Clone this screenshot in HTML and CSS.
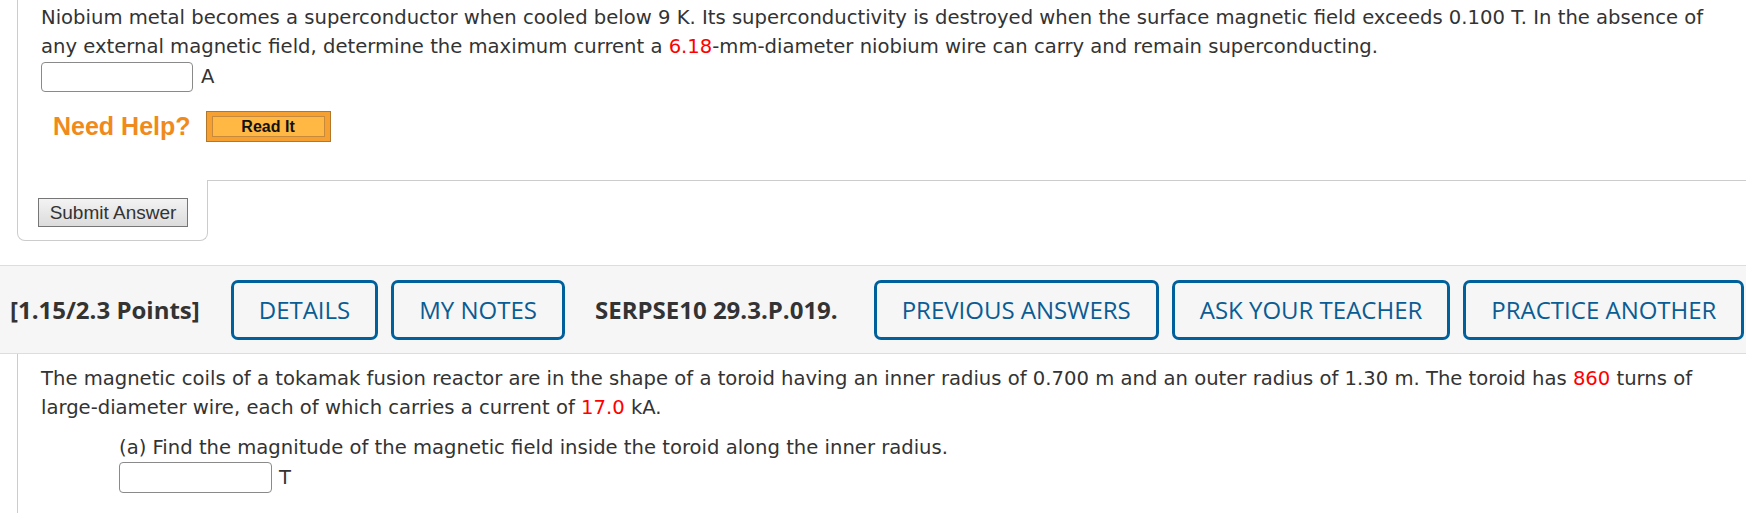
FILE: index.html
```html
<!DOCTYPE html>
<html lang="en">
<head>
<meta charset="utf-8">
<title>Question</title>
<link rel="stylesheet" href="styles.css">
</head>
<body>
<div class="page">
  <section class="q q1">
    <p class="qtext">Niobium metal becomes a superconductor when cooled below 9 K. Its superconductivity is destroyed when the surface magnetic field exceeds 0.100 T. In the absence of any external magnetic field, determine the maximum current a <span class="red">6.18</span>-mm-diameter niobium wire can carry and remain superconducting.</p>
    <div class="answer"><input class="ans" type="text"><span class="unit">A</span></div>
    <div class="help"><span class="need">Need Help?</span><button class="readit" type="button"><span class="readit-in">Read It</span></button></div>
  </section>
  <div class="qfoot">
    <div class="tab"><button class="submit" type="button">Submit Answer</button></div>
    <div class="fill"></div>
  </div>
  <div class="bar">
    <span class="pts">[1.15/2.3 Points]</span>
    <button class="btn" type="button">DETAILS</button>
    <button class="btn" type="button">MY NOTES</button>
    <span class="code">SERPSE10 29.3.P.019.</span>
    <button class="btn" type="button">PREVIOUS ANSWERS</button>
    <button class="btn" type="button">ASK YOUR TEACHER</button>
    <button class="btn" type="button">PRACTICE ANOTHER</button>
  </div>
  <section class="q q2">
    <p class="qtext">The magnetic coils of a tokamak fusion reactor are in the shape of a toroid having an inner radius of 0.700 m and an outer radius of 1.30 m. The toroid has <span class="red">860</span> turns of large-diameter wire, each of which carries a current of <span class="red">17.0</span> kA.</p>
    <div class="sub">
      <p class="qtext">(a) Find the magnitude of the magnetic field inside the toroid along the inner radius.</p>
      <div class="answer"><input class="ans ans2" type="text"><span class="unit">T</span></div>
    </div>
  </section>
</div>
</body>
</html>
```

FILE: styles.css
```css
html, body {
  margin: 0;
  padding: 0;
  background: #ffffff;
  overflow: hidden;
}
body {
  font-family: "DejaVu Sans", Verdana, sans-serif;
  font-size: 19.6px;
  color: #333333;
}
.page {
  width: 1746px;
}
.q {
  margin-left: 17px;
  border-left: 1px solid #cccccc;
  padding-left: 23px;
  padding-right: 28px;
}
.q1 {
  padding-top: 3px;
  padding-bottom: 38px;
}
.qtext {
  margin: 0;
  line-height: 29px;
}
.red {
  color: #ff0000;
}
.answer {
  display: flex;
  align-items: center;
  gap: 8px;
  margin-top: 1px;
}
.ans {
  width: 152px;
  height: 30px;
  box-sizing: border-box;
  border: 1px solid #8a8a8a;
  border-radius: 4px;
  padding: 0;
  margin: 0;
  background: #ffffff;
}
.unit {
  line-height: 30px;
}
.help {
  display: flex;
  align-items: center;
  gap: 15px;
  margin-top: 19px;
  padding-left: 12px;
}
.need {
  font-family: "Liberation Sans", Arial, sans-serif;
  font-weight: bold;
  font-size: 25px;
  color: #f08a1d;
}
.readit {
  box-sizing: border-box;
  width: 125px;
  height: 31px;
  margin: 0;
  padding: 4px 5px;
  border: 1px solid #b3772c;
  background: #f6a031;
  display: flex;
  cursor: pointer;
}
.readit-in {
  flex: 1;
  display: flex;
  align-items: center;
  justify-content: center;
  border: 1px solid #c7893a;
  background: #ffb843;
  font-family: "Liberation Sans", Arial, sans-serif;
  font-weight: bold;
  font-size: 16px;
  color: #111111;
}
.qfoot {
  display: flex;
  margin-left: 17px;
}
.tab {
  width: 191px;
  height: 61px;
  box-sizing: border-box;
  border: 1px solid #cccccc;
  border-top: none;
  border-radius: 0 0 8px 8px;
  padding: 18px 0 0 20px;
}
.fill {
  flex: 1;
  border-top: 1px solid #cccccc;
}
.submit {
  box-sizing: border-box;
  width: 150px;
  height: 29px;
  margin: 0;
  padding: 0;
  border: 1px solid #767676;
  background: linear-gradient(#f3f3f3, #dcdcdc);
  font-family: "Liberation Sans", Arial, sans-serif;
  font-size: 19px;
  color: #333333;
}
.bar {
  margin-top: 24px;
  height: 87px;
  border-top: 1px solid #dddddd;
  border-bottom: 1px solid #dddddd;
  background: #f6f6f6;
  display: flex;
  align-items: center;
  gap: 13px;
  white-space: nowrap;
  font-family: "Open Sans", sans-serif;
  font-size: 24px;
}
.pts, .code {
  font-weight: 700;
  color: #333333;
  flex: none;
}
.pts {
  margin-left: 10px;
  margin-right: 18px;
}
.code {
  margin-left: 17px;
  margin-right: 23px;
}
.btn {
  flex: none;
  height: 60px;
  box-sizing: border-box;
  margin: 0;
  padding: 0 25px;
  border: 3px solid #00609c;
  border-radius: 7px;
  background: transparent;
  color: #0a5c93;
  font-family: "Open Sans", sans-serif;
  font-size: 24px;
  display: flex;
  align-items: center;
}
.q2 {
  padding-top: 10px;
  padding-bottom: 40px;
}
.sub {
  margin-top: 11px;
  margin-left: 78px;
}
.answer .ans2 {
  width: 153px;
  height: 31px;
}
.sub .answer {
  margin-top: 0;
  gap: 7px;
}
```
